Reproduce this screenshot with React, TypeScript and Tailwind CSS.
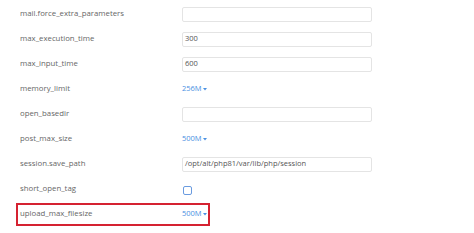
type Row = {
  name: string
  kind: 'input' | 'select' | 'checkbox'
  value?: string
}

const rows: Row[] = [
  { name: 'mail.force_extra_parameters', kind: 'input', value: '' },
  { name: 'max_execution_time', kind: 'input', value: '300' },
  { name: 'max_input_time', kind: 'input', value: '600' },
  { name: 'memory_limit', kind: 'select', value: '256M' },
  { name: 'open_basedir', kind: 'input', value: '' },
  { name: 'post_max_size', kind: 'select', value: '500M' },
  { name: 'session.save_path', kind: 'input', value: '/opt/alt/php81/var/lib/php/session' },
  { name: 'short_open_tag', kind: 'checkbox' },
]

function Value({ row }: { row: Row }) {
  if (row.kind === 'input') {
    return (
      <div className="w-[190px] h-[15px] border border-[#e4e4e4] rounded-[2px] bg-white flex items-center pl-[2px] text-[7.5px] text-[#555]">
        {row.value}
      </div>
    )
  }
  if (row.kind === 'checkbox') {
    return <div className="ml-[1px] mt-[2px] w-[9px] h-[9px] border border-[#6a9be0] rounded-[2px] bg-white" />
  }
  return (
    <div className="flex items-center gap-[1px] text-[7.5px] text-[#4a90e2]">
      <span>{row.value}</span>
      <svg width="4" height="3" viewBox="0 0 4 3" className="mt-[1px]">
        <path d="M0 0h4L2 2.5z" fill="#4a90e2" />
      </svg>
    </div>
  )
}

export default function App() {
  return (
    <div className="w-[474px] h-[233px] bg-white pt-[1.5px] font-['Open_Sans',sans-serif] text-[#666]">
      {rows.map(row => (
        <div key={row.name} className="flex items-center h-[25px]">
          <div className="w-[182px] pl-[20px] text-[7.8px]">{row.name}</div>
          <Value row={row} />
        </div>
      ))}
      <div className="flex items-center h-[25px]">
        <div className="ml-[16px] w-[194px] h-[23px] border-2 border-[#d52231] flex items-center">
          <div className="w-[164px] pl-[2px] text-[7.8px]">upload_max_filesize</div>
          <Value row={{ name: 'upload_max_filesize', kind: 'select', value: '500M' }} />
        </div>
      </div>
    </div>
  )
}
